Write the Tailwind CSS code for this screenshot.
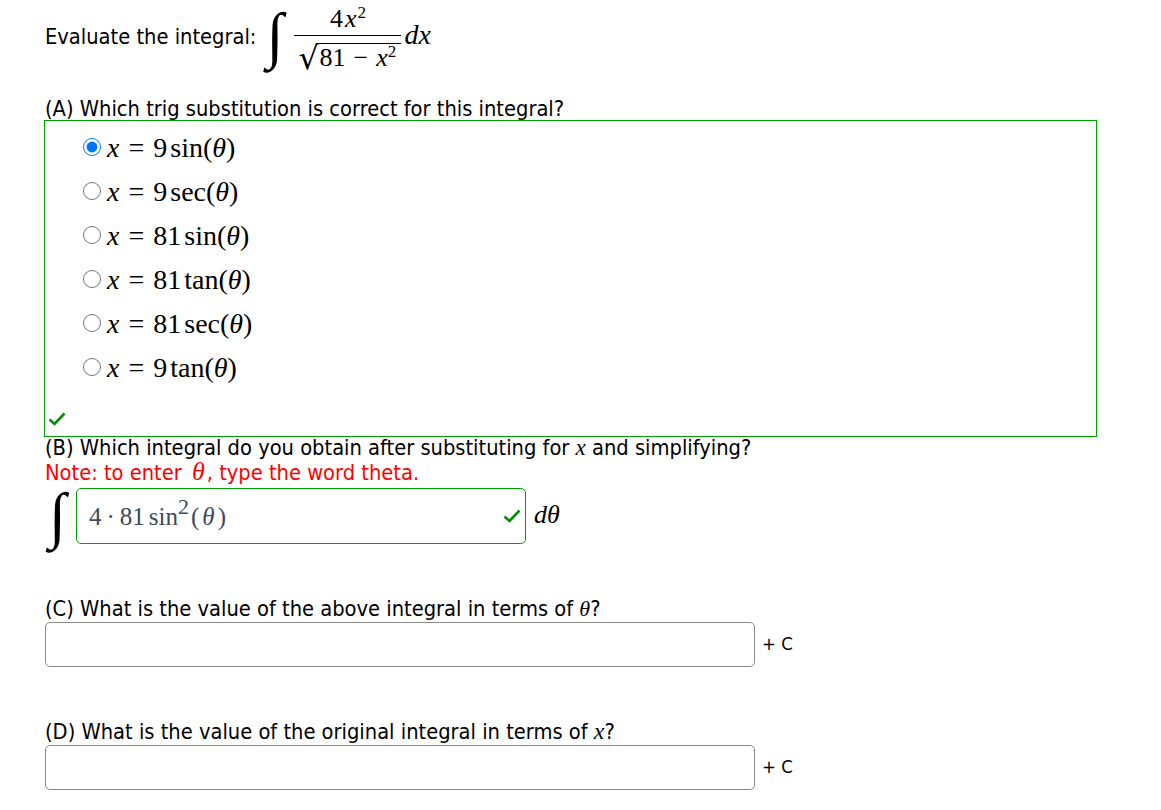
<!DOCTYPE html>
<html lang="en">
  <head>
    <meta charset="UTF-8" />
    <title>Integral</title>
    <script src="https://cdn.jsdelivr.net/npm/@tailwindcss/browser@4"></script>
  </head>
  <body class="bg-white text-black font-['DejaVu_Sans_Condensed','DejaVu_Sans',sans-serif] text-[21.7px] leading-[25px]">
    <main class="pl-[45px] pr-[64px]">
      <!-- question -->
      <div class="h-[72px] flex items-center">
        <span>Evaluate the integral:</span>
        <span class="ml-[10px] w-[28px] h-[72px] font-['Liberation_Serif',serif] italic text-[62px] leading-[70px]">∫</span>
        <div class="w-[107px] flex flex-col items-center font-['Liberation_Serif',serif] text-[26px]">
          <div class="h-[33px] border-b border-black w-full text-center leading-[32px]">4<i class="pl-[2px] pr-[1px]">x</i><sup class="text-[17px]">2</sup></div>
          <div class="h-[34px] flex items-start pl-[4px] w-full">
            <span class="w-[21px] text-[32px] leading-[44px] font-['DejaVu_Sans',sans-serif]">√</span>
            <span class="border-t border-black mt-[7px] flex-1 leading-[28px] whitespace-nowrap">81<span class="mx-[8px]">−</span><i>x</i><sup class="text-[17px]">2</sup></span>
          </div>
        </div>
        <i class="ml-[3px] pb-[3px] font-['Liberation_Serif',serif] text-[28px]">dx</i>
      </div>

      <!-- part A -->
      <p class="mt-[24px] h-[24px]">(A) Which trig substitution is correct for this integral?</p>
      <div class="-ml-px border border-[#00a000] h-[317px] flex flex-col">
        <div class="pl-[38px] pt-[4px] flex flex-col font-['Liberation_Serif',serif] text-[28px]">
          <label class="h-[44px] flex items-center gap-[6px]"><input type="radio" name="a" checked class="size-[18px] accent-[#0075ff]" /><span><i>x</i><span class="mx-[9px]">=</span>9<span class="ml-[3px]">sin</span>(<i>θ</i>)</span></label>
          <label class="h-[44px] flex items-center gap-[6px]"><input type="radio" name="a" class="size-[18px]" /><span><i>x</i><span class="mx-[9px]">=</span>9<span class="ml-[3px]">sec</span>(<i>θ</i>)</span></label>
          <label class="h-[44px] flex items-center gap-[6px]"><input type="radio" name="a" class="size-[18px]" /><span><i>x</i><span class="mx-[9px]">=</span>81<span class="ml-[3px]">sin</span>(<i>θ</i>)</span></label>
          <label class="h-[44px] flex items-center gap-[6px]"><input type="radio" name="a" class="size-[18px]" /><span><i>x</i><span class="mx-[9px]">=</span>81<span class="ml-[3px]">tan</span>(<i>θ</i>)</span></label>
          <label class="h-[44px] flex items-center gap-[6px]"><input type="radio" name="a" class="size-[18px]" /><span><i>x</i><span class="mx-[9px]">=</span>81<span class="ml-[3px]">sec</span>(<i>θ</i>)</span></label>
          <label class="h-[44px] flex items-center gap-[6px]"><input type="radio" name="a" class="size-[18px]" /><span><i>x</i><span class="mx-[9px]">=</span>9<span class="ml-[3px]">tan</span>(<i>θ</i>)</span></label>
        </div>
        <svg class="mt-auto mb-[10px] ml-[3px]" width="18" height="14" viewBox="0 0 18 14" fill="none" stroke="#0a8a0a" stroke-width="2.6"><path d="M1.5 7.5 L6.5 12 L16.5 1.5" /></svg>
      </div>

      <!-- part B -->
      <p class="h-[25px] -mt-[2px]">(B) Which integral do you obtain after substituting for <i class="font-['Liberation_Serif',serif] text-[23px] leading-none">x</i> and simplifying?</p>
      <p class="h-[25px] -mt-[1px] text-[#ff0000]">Note: to enter <i class="ml-[4px] mr-[2px] font-['Liberation_Serif',serif] text-[26px] leading-none">θ</i>, type the word theta.</p>
      <div class="mt-[4px] h-[56px] flex items-center">
        <span class="w-[31px] h-[56px] pl-[4px] font-['Liberation_Serif',serif] italic text-[62px] leading-[54px]">∫</span>
        <div class="w-[450px] h-[56px] border border-[#00a000] rounded-[5px] flex items-center justify-between pl-[12px] pr-[4px] font-['Liberation_Serif',serif] text-[25px] text-[#3d4a5c]">
          <span>4<span class="mx-[5px]">·</span>81<span class="ml-[4px]">sin</span><sup class="text-[22px]">2</sup><span class="ml-[2px]">(</span><i class="px-[3px]">θ</i>)</span>
          <svg width="18" height="14" viewBox="0 0 18 14" fill="none" stroke="#0a8a0a" stroke-width="2.6"><path d="M1.5 7.5 L6.5 12 L16.5 1.5" /></svg>
        </div>
        <i class="ml-[8px] pb-[3px] font-['Liberation_Serif',serif] text-[26px]">dθ</i>
      </div>

      <!-- part C -->
      <p class="mt-[52px] h-[25px]">(C) What is the value of the above integral in terms of <i class="font-['Liberation_Serif',serif] text-[22px] leading-none">θ</i>?</p>
      <div class="mt-[1px] flex items-center gap-[7px] text-[18.5px]">
        <input type="text" class="w-[710px] h-[45px] border border-[#8a8a8a] rounded-[5px]" />
        <span class="pb-[3px]">+ C</span>
      </div>

      <!-- part D -->
      <p class="mt-[52px] h-[25px]">(D) What is the value of the original integral in terms of <i class="font-['Liberation_Serif',serif] text-[24px] leading-none">x</i>?</p>
      <div class="mt-[1px] flex items-center gap-[7px] text-[18.5px]">
        <input type="text" class="w-[710px] h-[45px] border border-[#8a8a8a] rounded-[5px]" />
        <span class="pb-[3px]">+ C</span>
      </div>
    </main>
  </body>
</html>
